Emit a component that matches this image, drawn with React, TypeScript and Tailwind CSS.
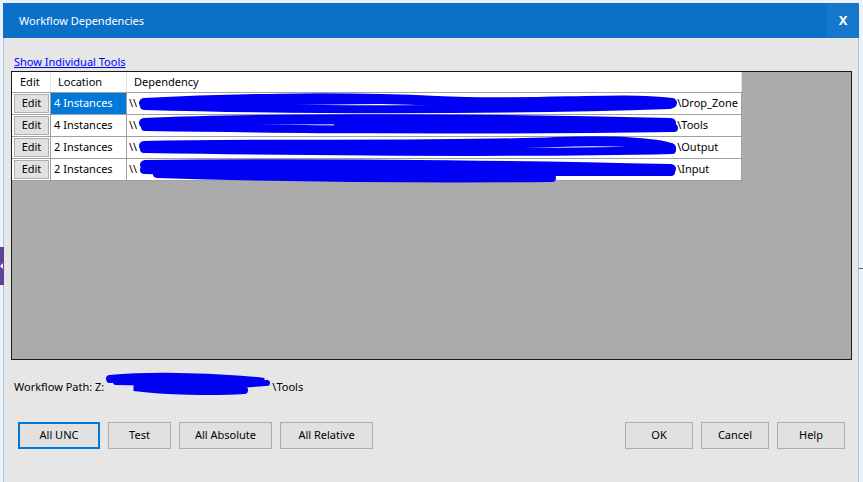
import React from "react";

const rows = [
  { loc: "4 Instances", suffix: "\\Drop_Zone", sel: true, paths: ["M7 10 C 80 6, 200 3, 300 8 C 400 13, 480 3, 535 10", "M7 13 C 150 17, 350 18, 533 12", "M80 9 L 240 7"] },
  { loc: "4 Instances", suffix: "\\Tools", sel: false, paths: ["M7 8 C 100 4, 300 2, 534 8", "M8 12 C 150 14, 300 16, 537 13", "M200 7 C 300 9, 420 12, 534 11"] },
  { loc: "2 Instances", suffix: "\\Output", sel: false, paths: ["M7 9 C 120 6, 300 10, 420 5 C 480 3, 520 6, 534 11", "M7 12 C 200 15, 400 16, 535 13"] },
  { loc: "2 Instances", suffix: "\\Input", sel: false, paths: ["M8 6 C 150 4, 350 6, 534 10", "M7 11 C 120 14, 300 13, 534 13", "M20 15 C 150 19, 300 20, 415 19"] },
];

function Btn({ label, w, focus }: { label: string; w: string; focus?: boolean }) {
  return (
    <div
      className={`${w} h-[27px] flex items-center justify-center bg-[#e1e1e1] text-[11px] text-black ${
        focus ? "border-2 border-[#0078d7]" : "border border-[#adadad]"
      }`}
    >
      {label}
    </div>
  );
}

export default function App() {
  return (
    <div
      className="relative w-[863px] h-[482px] overflow-hidden bg-[#eef1f5] flex"
      style={{ fontFamily: "'Noto Sans', 'Open Sans', sans-serif" }}
    >
      <div className="absolute left-0 top-[247px] w-[4px] h-[38px] bg-[#5e4398] flex items-center">
        <div className="w-[3px] h-[6px] bg-white [clip-path:polygon(100%_0,0_50%,100%_100%)]" />
      </div>
      <div className="absolute left-[859px] top-[268px] w-[4px] h-px bg-[#666]" />

      <div className="ml-[3px] mt-[3px] w-[856px] h-[479px] flex flex-col bg-[#e6e6e6] border-x border-[#a8c3e3]">
        <div className="h-[35px] -mx-px bg-[#0b70c7] flex items-center justify-between">
          <span className="ml-[16px] mt-[1px] text-white text-[11px]">Workflow Dependencies</span>
          <div className="w-[32px] h-full bg-[#1676c9] flex items-center justify-center text-white text-[13px] font-bold">
            X
          </div>
        </div>

        <div className="flex flex-col pl-[7px] pr-[6px]">
          <span className="mt-[16px] ml-[3px] text-[11px] leading-[16px] text-[#0000ff] underline">
            Show Individual Tools
          </span>

          <div className="mt-[1px] h-[289px] border border-[#1a1a1a] bg-[#ababab]">
            <div className="w-[730px] text-[11px] text-black">
              <div className="grid grid-cols-[39px_76px_615px] h-[21px] bg-white border-b border-[#a0a0a0]">
                <div className="border-r border-[#e0e0e0] flex items-center pl-[8px]">Edit</div>
                <div className="border-r border-[#e0e0e0] flex items-center pl-[7px]">Location</div>
                <div className="border-r border-[#e0e0e0] flex items-center pl-[7px]">Dependency</div>
              </div>
              {rows.map((r, i) => (
                <div key={i} className="grid grid-cols-[39px_76px_615px] h-[22px] bg-white border-b border-[#a0a0a0]">
                  <div className="border-r border-[#a0a0a0] p-px pl-[2px]">
                    <div className="h-[19px] w-[35px] bg-[#e1e1e1] border border-[#adadad] flex items-center justify-center">
                      Edit
                    </div>
                  </div>
                  <div
                    className={`border-r border-[#a0a0a0] flex items-center pl-[3px] ${
                      r.sel ? "bg-[#0078d7] text-white" : ""
                    }`}
                  >
                    {r.loc}
                  </div>
                  <div className="border-r border-[#a0a0a0] flex items-center pl-[2px] whitespace-nowrap">
                    <span>{"\\\\"}</span>
                    <svg width="540" height="21" viewBox="0 0 540 21" className="overflow-visible shrink-0">
                      {r.paths.map((d, j) => (
                        <path key={j} d={d} stroke="#0000f5" strokeWidth={j === 0 ? 10 : 8} fill="none" strokeLinecap="round" />
                      ))}
                    </svg>
                    <span>{r.suffix}</span>
                  </div>
                </div>
              ))}
            </div>
          </div>

          <div className="mt-[19px] ml-[3px] h-[16px] flex items-center text-[11px] text-black whitespace-nowrap">
            <span>Workflow Path: Z:</span>
            <svg width="168" height="16" viewBox="0 0 168 16" className="overflow-visible shrink-0">
              <path d="M6 0 C 50 -4, 120 -2, 160 3 C 120 7, 60 5, 30 8 C 60 12, 110 13, 140 11" stroke="#0000f5" strokeWidth="8" fill="none" strokeLinecap="round" />
              <path d="M12 3 C 70 4, 130 4, 163 4" stroke="#0000f5" strokeWidth="6" fill="none" strokeLinecap="round" />
            </svg>
            <span>{"\\Tools"}</span>
          </div>

          <div className="mt-[27px] flex items-center">
            <div className="ml-[7px] flex gap-[8px]">
              <Btn label="All UNC" w="w-[82px]" focus />
              <Btn label="Test" w="w-[63px]" />
              <Btn label="All Absolute" w="w-[93px]" />
              <Btn label="All Relative" w="w-[93px]" />
            </div>
            <div className="ml-auto mr-[7px] flex gap-[8px]">
              <Btn label="OK" w="w-[68px]" />
              <Btn label="Cancel" w="w-[68px]" />
              <Btn label="Help" w="w-[68px]" />
            </div>
          </div>
        </div>
      </div>
    </div>
  );
}
